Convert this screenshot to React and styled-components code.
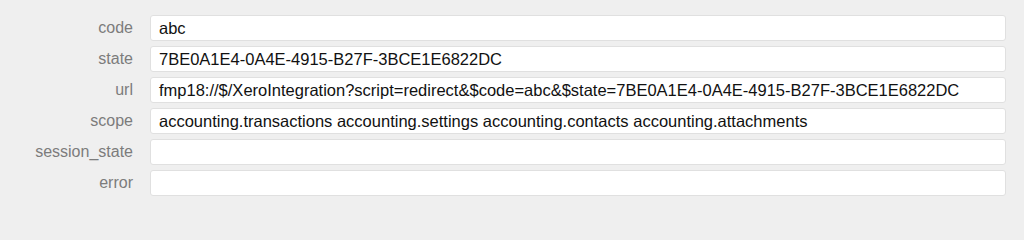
import React from "react";
import styled, { createGlobalStyle } from "styled-components";

const Global = createGlobalStyle`
  html, body { margin: 0; padding: 0; background: #efefef; }
  body { font-family: "Liberation Sans", Arial, Helvetica, sans-serif; }
`;

const Form = styled.div`
  display: grid;
  grid-template-columns: 133px 1fr;
  grid-auto-rows: 26px;
  align-content: start;
  column-gap: 17px;
  row-gap: 5px;
  padding: 15px 18px 0 0;
  width: 1024px;
  box-sizing: border-box;
  height: 216px;
  background: #efefef;
`;

const Label = styled.div`
  text-align: right;
  font-size: 16px;
  color: #7c7c7c;
  line-height: 26px;
  height: 26px;
`;

const Field = styled.div`
  height: 26px;
  box-sizing: border-box;
  background: #ffffff;
  border: 1px solid #e0e0e0;
  border-radius: 3px;
  padding: 0 8px;
  font-size: 16.5px;
  line-height: 24px;
  color: #111;
  white-space: nowrap;
  overflow: hidden;
`;

const rows = [
  ["code", "abc"],
  ["state", "7BE0A1E4-0A4E-4915-B27F-3BCE1E6822DC"],
  ["url", "fmp18://$/XeroIntegration?script=redirect&$code=abc&$state=7BE0A1E4-0A4E-4915-B27F-3BCE1E6822DC"],
  ["scope", "accounting.transactions accounting.settings accounting.contacts accounting.attachments"],
  ["session_state", ""],
  ["error", ""],
];

export default function App() {
  return (
    <>
      <Global />
      <Form>
        {rows.map(([k, v]) => (
          <React.Fragment key={k}>
            <Label>{k}</Label>
            <Field>{v}</Field>
          </React.Fragment>
        ))}
      </Form>
    </>
  );
}
